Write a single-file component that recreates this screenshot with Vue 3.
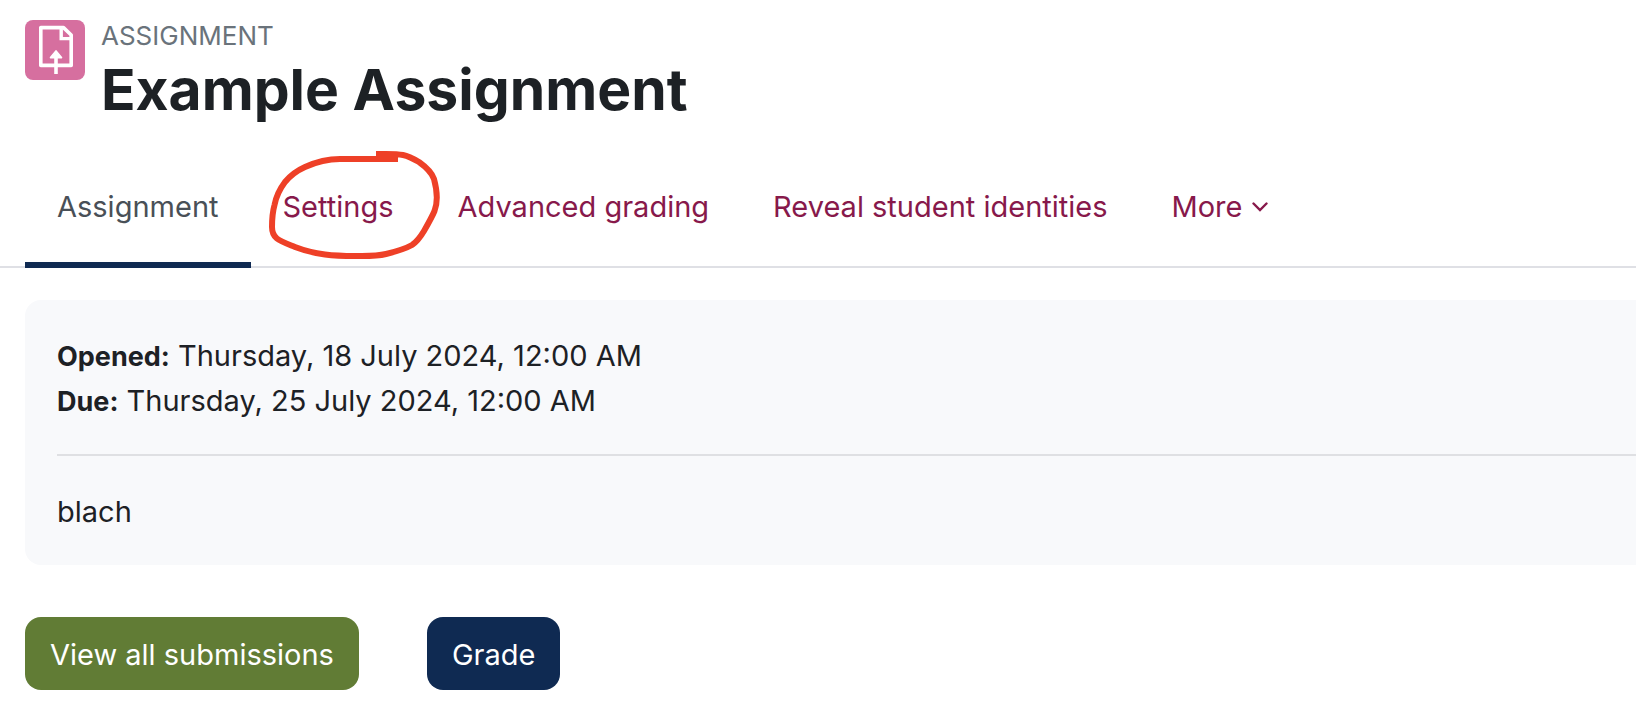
<script setup>
const tabs = [
  { label: 'Assignment', active: true },
  { label: 'Settings', circled: true },
  { label: 'Advanced grading' },
  { label: 'Reveal student identities' },
]
const dates = [
  { label: 'Opened:', value: 'Thursday, 18 July 2024, 12:00 AM' },
  { label: 'Due:', value: 'Thursday, 25 July 2024, 12:00 AM' },
]
</script>

<template>
  <div class="page">
    <header class="heading">
      <svg class="badge" viewBox="0 0 60 60" aria-hidden="true">
        <rect width="60" height="60" rx="8" fill="#d66f9f" />
        <path d="M15.800 7.600H38.500L46.200 15V45.400H15.800z" fill="none" stroke="#fff" stroke-width="3.600" stroke-linejoin="round" />
        <path d="M36.200 8v10.600H46" fill="none" stroke="#fff" stroke-width="3.400" />
        <path d="M31 54V36" fill="none" stroke="#fff" stroke-width="3.600" />
        <path d="M31 31l5.400 6.600H25.600z" fill="#fff" stroke="#fff" stroke-width="1.800" stroke-linejoin="round" />
      </svg>
      <div>
        <div class="kind">ASSIGNMENT</div>
        <h1>Example Assignment</h1>
      </div>
    </header>

    <nav class="tabs" aria-label="Assignment">
      <a v-for="tab in tabs" :key="tab.label" href="#" class="tab" :class="{ active: tab.active }">
        {{ tab.label }}
        <svg v-if="tab.circled" class="circle" viewBox="266 148 178 116" aria-hidden="true">
          <path d="M398 159H340C327 159 316 162 305 167C296 171 290 176 285 182C279 190 276 197 274.500 205C272 214 272 219 272 227C272 239 280 241 295 247C304 250.500 314 253 325 254.500C337 256 344 256 355 256C367 256 376 256.500 386 254C396 251.500 405 249 412 245C418 241 421 236 424 231C428 224 432 217 434.500 211C438 202 437 190 434 179C432 173 426 167 419 162C413 158.500 408 156 403 155C396 153.500 387 154 376 154" />
        </svg>
      </a>
      <button type="button" class="tab more">
        More
        <svg class="chevron" viewBox="0 0 16 10" aria-hidden="true"><path d="M1.500 1.500L8 8l6.500-6.500" /></svg>
      </button>
    </nav>

    <main>
      <section class="card">
        <div class="dates">
          <div v-for="d in dates" :key="d.label"><strong>{{ d.label }}</strong> {{ d.value }}</div>
        </div>
        <p class="intro">blach</p>
      </section>
      <div class="actions">
        <button type="button" class="btn view">View all submissions</button>
        <button type="button" class="btn grade">Grade</button>
      </div>
    </main>
  </div>
</template>

<style>
body {
  margin: 0;
  background: #fff;
}
</style>

<style scoped>
.page {
  font-family: Inter, "Liberation Sans", sans-serif;
  font-size: 29px;
  line-height: 45px;
  color: #1d2125;
  overflow-x: hidden;
}
.heading {
  display: flex;
  align-items: flex-start;
  gap: 16px;
  padding: 20px 25px 16px;
}
.badge {
  flex: none;
  width: 60px;
  height: 60px;
}
.kind {
  font-size: 26px;
  line-height: 32px;
  color: #6a737b;
}
h1 {
  margin: 0;
  font-size: 57px;
  line-height: 76px;
  font-weight: 700;
}
.tabs {
  display: flex;
  padding: 0 25px;
  background: linear-gradient(#dfe0e5, #dfe0e5) bottom / 100% 2px no-repeat;
}
.tab {
  position: relative;
  padding: 40px 32px 33px;
  border: 0;
  border-bottom: 6px solid transparent;
  background: none;
  font: inherit;
  color: #87194b;
  text-decoration: none;
  white-space: nowrap;
}
.tab.active {
  color: #495057;
  border-bottom-color: #0f2a52;
}
.more {
  display: flex;
  align-items: center;
  gap: 10px;
}
.chevron {
  width: 16px;
  height: 10px;
  fill: none;
  stroke: currentColor;
  stroke-width: 2.4;
  stroke-linecap: round;
}
.circle {
  position: absolute;
  left: 15px;
  top: 4px;
  width: 178px;
  height: 116px;
  fill: none;
  stroke: #ee4027;
  stroke-width: 6;
  stroke-linejoin: round;
  pointer-events: none;
}
main {
  padding: 32px 0 36px 25px;
}
.card {
  padding: 33px 0 31px 32px;
  border-radius: 16px 0 0 16px;
  background: #f8f9fb;
}
.dates {
  padding-bottom: 31px;
  border-bottom: 2px solid #dfe0e3;
}
.dates strong {
  font-size: 27px;
  line-height: 1;
  font-weight: 700;
}
.intro {
  margin: 33px 0 0;
}
.actions {
  display: flex;
  gap: 68px;
  margin-top: 52px;
}
.btn {
  padding: 15px 25px 13px;
  border: 0;
  border-radius: 16px;
  font: inherit;
  color: #fff;
}
.view {
  background: #617c35;
}
.grade {
  background: #0f2a52;
}
</style>
